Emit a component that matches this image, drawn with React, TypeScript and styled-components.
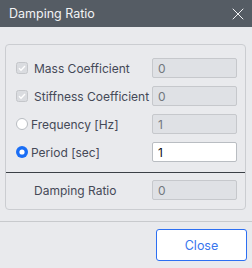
import React, { useState } from 'react';
import styled, { createGlobalStyle } from 'styled-components';
import { X } from 'lucide-react';

const GlobalStyle = createGlobalStyle`
  html, body {
    margin: 0;
    padding: 0;
    background: #e9eaed;
  }
  * {
    box-sizing: border-box;
  }
`;

const Dialog = styled.div`
  width: 252px;
  height: 268px;
  display: flex;
  flex-direction: column;
  background: #e9eaed;
  font-family: Inter, 'Noto Sans', sans-serif;
  font-size: 12px;
  color: #454957;
`;

const TitleBar = styled.div`
  height: 27px;
  flex-shrink: 0;
  background: #555c64;
  color: #f2f3f5;
  display: flex;
  align-items: center;
  justify-content: space-between;
  padding: 0 4px 0 9px;
  font-size: 12.5px;
`;

const CloseIcon = styled.button`
  border: none;
  background: none;
  padding: 0;
  color: #f2f3f5;
  display: flex;
  cursor: pointer;
`;

const Body = styled.div`
  flex: 1;
  padding: 17px 6px 10px 5px;
`;

const Panel = styled.div`
  border: 1px solid #cbcdd1;
  border-radius: 4px;
  padding: 13px 8px 9px 9px;
  display: flex;
  flex-direction: column;
`;

const Row = styled.div`
  height: 20px;
  display: flex;
  align-items: center;
  justify-content: space-between;
  margin-bottom: 8px;
  &:last-child {
    margin-bottom: 0;
  }
`;

const Label = styled.label<{ $gap: number; $pad?: number }>`
  display: flex;
  align-items: center;
  gap: ${p => p.$gap}px;
  padding-left: ${p => p.$pad ?? 0}px;
  white-space: nowrap;
  cursor: pointer;
`;

const Field = styled.input<{ $active?: boolean }>`
  width: 85px;
  height: 20px;
  border: 1px solid ${p => (p.$active ? '#b9bdc2' : '#c6c8cc')};
  background: ${p => (p.$active ? '#ffffff' : '#dfe1e5')};
  color: ${p => (p.$active ? '#111111' : '#73787e')};
  border-radius: 2px;
  padding: 0 5px;
  font-family: Inter, 'Noto Sans', sans-serif;
  font-size: 12px;
  outline: none;
`;

const Divider = styled.div`
  height: 1px;
  background: #3b4046;
  margin: 2px -8px 7px -9px;
`;

const Footer = styled.div`
  border-top: 1px solid #c8cacd;
  display: flex;
  justify-content: flex-end;
  padding: 7px 5px 7px 0;
`;

const Button = styled.button`
  width: 91px;
  height: 32px;
  background: #ffffff;
  border: 1px solid #2c6ff2;
  border-radius: 3px;
  color: #3a76ee;
  font-family: Inter, 'Noto Sans', sans-serif;
  font-size: 12.5px;
  cursor: pointer;
`;

function Check() {
  return (
    <svg width='12' height='12' viewBox='0 0 12 12'>
      <rect x='0.5' y='0.5' width='11' height='11' rx='2' fill='#dadce0' stroke='#c4c6ca' />
      <path d='M3 6.2 L5 8.2 L9 4' fill='none' stroke='#ffffff' strokeWidth='1.4' />
    </svg>
  );
}

function Radio({ on }: { on: boolean }) {
  return (
    <svg width='12' height='12' viewBox='0 0 12 12'>
      {on ? (
        <>
          <circle cx='6' cy='6' r='6' fill='#1a6ef5' />
          <circle cx='6' cy='6' r='2.6' fill='#ffffff' />
        </>
      ) : (
        <circle cx='6' cy='6' r='5.5' fill='#ffffff' stroke='#b8bcc1' />
      )}
    </svg>
  );
}

export default function App() {
  const [mode, setMode] = useState<'freq' | 'period'>('period');
  const [period, setPeriod] = useState('1');

  return (
    <>
      <GlobalStyle />
      <Dialog>
        <TitleBar>
          Damping Ratio
          <CloseIcon aria-label='close'>
            <X size={20} strokeWidth={1.2} />
          </CloseIcon>
        </TitleBar>
        <Body>
          <Panel>
            <Row>
              <Label $gap={6} $pad={1}>
                <Check />
                Mass Coefficient
              </Label>
              <Field value='0' disabled readOnly />
            </Row>
            <Row>
              <Label $gap={6} $pad={1}>
                <Check />
                Stiffness Coefficient
              </Label>
              <Field value='0' disabled readOnly />
            </Row>
            <Row>
              <Label $gap={3} $pad={1} onClick={() => setMode('freq')}>
                <Radio on={mode === 'freq'} />
                Frequency [Hz]
              </Label>
              <Field value='1' disabled={mode !== 'freq'} $active={mode === 'freq'} readOnly />
            </Row>
            <Row>
              <Label $gap={3} $pad={1} onClick={() => setMode('period')}>
                <Radio on={mode === 'period'} />
                Period [sec]
              </Label>
              <Field
                value={period}
                disabled={mode !== 'period'}
                $active={mode === 'period'}
                onChange={e => setPeriod(e.target.value)}
              />
            </Row>
            <Divider />
            <Row>
              <Label $gap={0} $pad={19}>
                Damping Ratio
              </Label>
              <Field value='0' disabled readOnly />
            </Row>
          </Panel>
        </Body>
        <Footer>
          <Button>Close</Button>
        </Footer>
      </Dialog>
    </>
  );
}
